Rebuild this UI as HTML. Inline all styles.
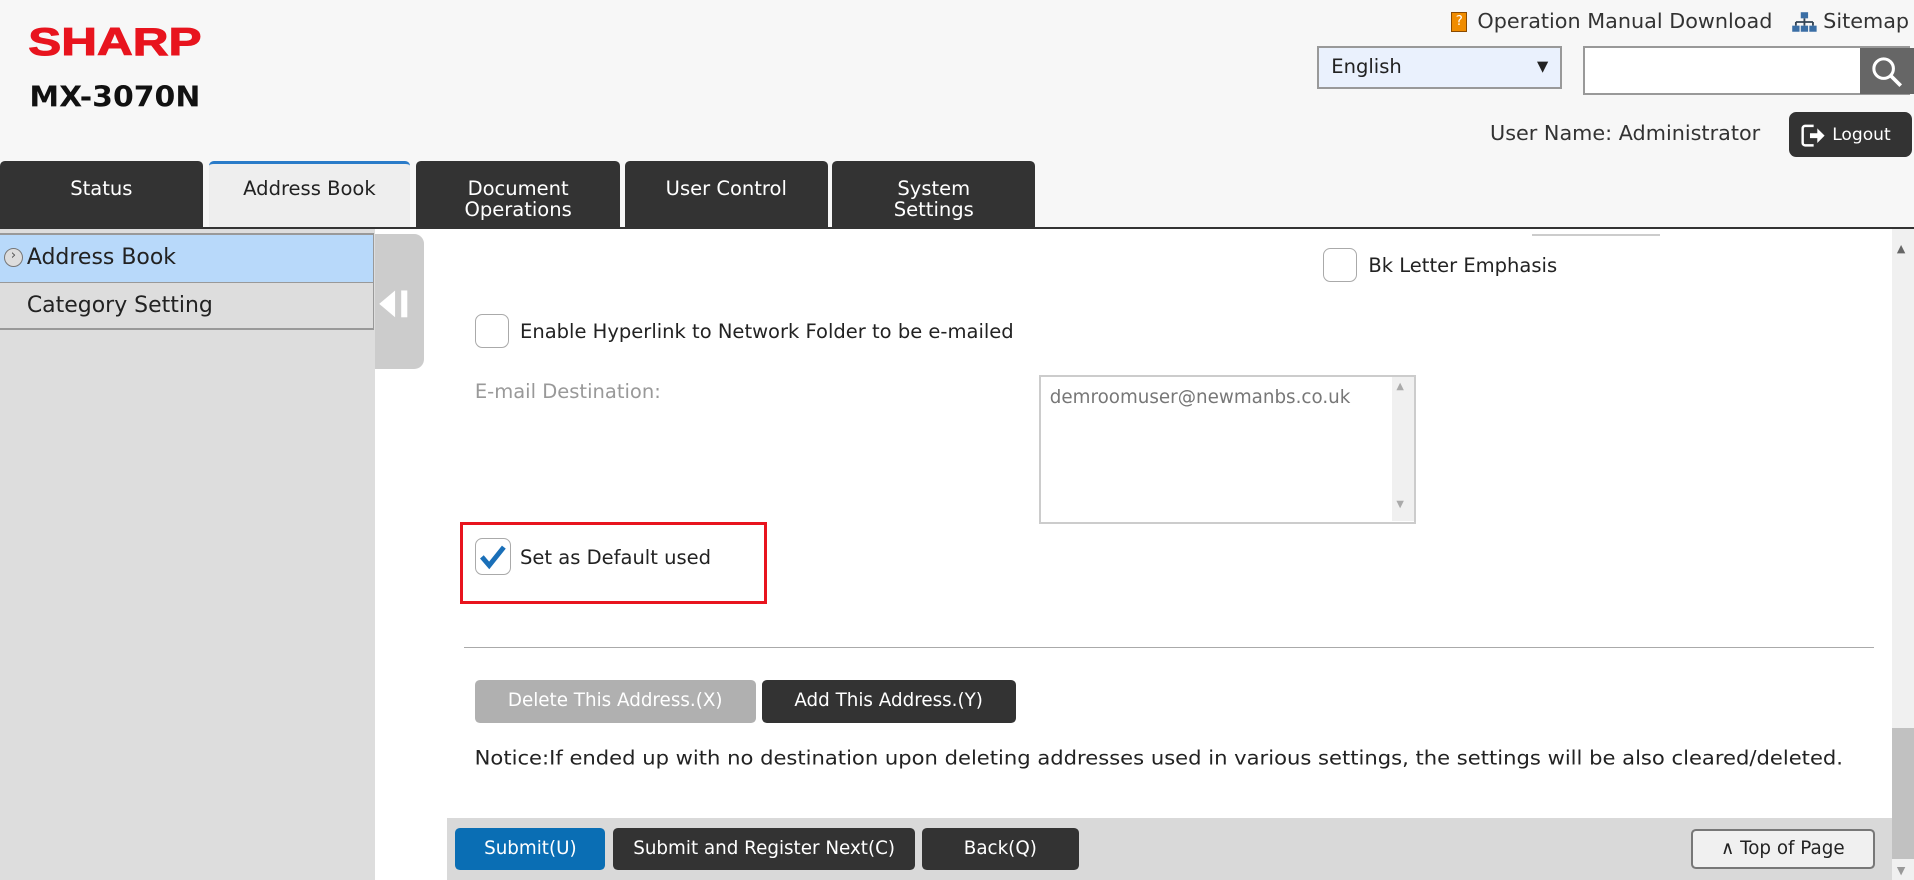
<!DOCTYPE html>
<html><head><meta charset="utf-8"><style>
html,body{margin:0;padding:0;overflow:hidden;width:1914px;height:880px;background:#fff}
#w{zoom:1.22066;width:1568px;height:721px;position:relative;font-family:"DejaVu Sans",sans-serif;color:#222;overflow:hidden}
.a{position:absolute;white-space:nowrap}
.hdr{left:0;top:0;width:1568px;height:187px;background:#f7f7f7}
.tab{top:132px;height:55px;background:#333;color:#fff;border-radius:4px 4px 0 0;text-align:center;font-size:16px;line-height:17px;box-sizing:border-box}
.cb{width:28px;height:28px;border:1px solid #aaa;border-radius:6px;background:#fff;box-sizing:border-box}
.btn{height:35px;border-radius:4px;color:#fff;font-size:15px;line-height:35px;text-align:center}
.t{font-size:16px}
</style></head><body><div id="w">
<div class="a hdr"></div>
<svg class="a" style="left:22px;top:18px" width="146" height="30"><text x="1" y="27" textLength="142" lengthAdjust="spacingAndGlyphs" font-family="Liberation Sans" font-weight="bold" font-size="32" fill="#e8141e" stroke="#e8141e" stroke-width="0.8">SHARP</text></svg>
<svg class="a" style="left:22px;top:62px" width="146" height="30"><text x="2" y="25" textLength="140" lengthAdjust="spacingAndGlyphs" font-family="DejaVu Sans" font-weight="bold" font-size="23" fill="#111">MX-3070N</text></svg>
<div class="a" style="left:1189px;top:10px;width:13px;height:16px;background:#f08c00;border:1px solid #8a4a00;box-sizing:border-box;color:#fff;font-size:11px;line-height:14px;text-align:center">?</div>
<div class="a" style="right:116px;top:7px;font-size:17px;color:#333">Operation Manual Download</div>
<svg class="a" style="left:1467px;top:9px" width="22" height="18" viewBox="0 0 22 18"><rect x="8" y="1" width="6" height="5" fill="#3a6ea5"/><path d="M11 6v3M4 9h14M4 9v3M11 9v3M18 9v3" stroke="#345" stroke-width="1.5" fill="none"/><rect x="1" y="12" width="6" height="5" fill="#3a6ea5"/><rect x="8" y="12" width="6" height="5" fill="#3a6ea5"/><rect x="15" y="12" width="6" height="5" fill="#3a6ea5"/></svg>
<div class="a" style="right:4px;top:7px;font-size:17px;color:#333">Sitemap</div>
<div class="a" style="left:1079px;top:38px;width:201px;height:35px;background:#eaf1fd;border:2px solid #999;box-sizing:border-box;font-size:16px;line-height:31px;padding-left:10px">English<span style="position:absolute;right:10px;font-size:12px">▼</span></div>
<div class="a" style="left:1297px;top:38px;width:268px;height:40px;background:#fff;border:2px solid #999;box-sizing:border-box"></div>
<div class="a" style="left:1524px;top:39px;width:44px;height:38px;background:#666"></div>
<svg class="a" style="left:1531px;top:44px" width="30" height="30" viewBox="0 0 30 30"><circle cx="12" cy="12" r="8" stroke="#fff" stroke-width="2.5" fill="none"/><path d="M18 18l8 8" stroke="#fff" stroke-width="3"/></svg>
<div class="a" style="right:126px;top:99px;font-size:17px;color:#333">User Name: Administrator</div>
<div class="a" style="left:1466px;top:92px;width:100px;height:37px;background:#333;border-radius:6px"></div>
<svg class="a" style="left:1474px;top:99px" width="24" height="24" viewBox="0 0 24 24"><path d="M12 4H5a2 2 0 0 0-2 2v12a2 2 0 0 0 2 2h7" stroke="#fff" stroke-width="2" fill="none"/><path d="M9 10h6V6l6 6-6 6v-4H9z" fill="#fff"/></svg>
<div class="a" style="left:1501px;top:102px;font-size:14px;color:#fff">Logout</div>
<div class="a tab" style="left:0;width:166px;padding-top:15px">Status</div>
<div class="a tab" style="left:171px;width:165px;background:#eee;color:#222;border-top:3px solid #2a7bc8;padding-top:12px">Address Book</div>
<div class="a tab" style="left:341px;width:167px;padding-top:15px">Document<br>Operations</div>
<div class="a tab" style="left:512px;width:166px;padding-top:15px">User Control</div>
<div class="a tab" style="left:682px;width:166px;padding-top:15px">System<br>Settings</div>
<div class="a" style="left:0;top:186px;width:1568px;height:2px;background:#333"></div>
<div class="a" style="left:0;top:188px;width:307px;height:533px;background:#ddd"></div>
<div class="a" style="left:0;top:191px;width:306px;height:40px;background:#b8d9fa;border-top:2px solid #999;border-right:1px solid #999;box-sizing:border-box"></div>
<div class="a" style="left:3px;top:203px;width:16px;height:16px;border:1.5px solid #777;border-radius:50%;box-sizing:border-box;background:#ddd;font-size:11px;line-height:12px;text-align:center;color:#555">›</div>
<div class="a" style="left:22px;top:201px;font-size:18px">Address Book</div>
<div class="a" style="left:0;top:231px;width:306px;height:39px;background:#ddd;border-top:1px solid #999;border-bottom:2px solid #999;border-right:1px solid #999;box-sizing:border-box"></div>
<div class="a" style="left:22px;top:240px;font-size:18px">Category Setting</div>
<div class="a" style="left:307px;top:192px;width:40px;height:110px;background:#ccc;border-radius:0 8px 8px 0"></div>
<svg class="a" style="left:310px;top:236px" width="30" height="26"><path d="M1 13L14 2v22z" fill="#fff"/><rect x="19" y="2" width="5" height="22" fill="#fff"/></svg>
<div class="a" style="left:1255px;top:192px;width:105px;height:1px;background:#ccc"></div>
<div class="a" style="left:1550px;top:188px;width:18px;height:533px;background:#f0f0f0"></div>
<div class="a" style="left:1550px;top:596px;width:18px;height:108px;background:#c1c1c1"></div>
<div class="a" style="left:1554px;top:198px;font-size:9px;color:#666">▲</div>
<div class="a" style="left:1554px;top:708px;font-size:9px;color:#999">▼</div>
<div class="a cb" style="left:1084px;top:203px"></div>
<div class="a t" style="left:1121px;top:208px">Bk Letter Emphasis</div>
<div class="a cb" style="left:389px;top:257px"></div>
<div class="a t" style="left:426px;top:262px">Enable Hyperlink to Network Folder to be e-mailed</div>
<div class="a t" style="left:389px;top:311px;color:#999">E-mail Destination:</div>
<div class="a" style="left:851px;top:307px;width:309px;height:122px;border:2px solid #ccc;box-sizing:border-box;background:#fff"></div>
<div class="a" style="left:1140px;top:309px;width:18px;height:118px;background:#f0f0f0"></div>
<div class="a" style="left:1144px;top:312px;font-size:8px;color:#aaa">▲</div>
<div class="a" style="left:1144px;top:409px;font-size:8px;color:#aaa">▼</div>
<div class="a" style="left:860px;top:317px;font-size:15px;color:#777">demroomuser@newmanbs.co.uk</div>
<div class="a" style="left:377px;top:428px;width:251px;height:67px;border:3px solid #e8141e;box-sizing:border-box"></div>
<div class="a cb" style="left:389px;top:441px;width:30px;height:30px"></div>
<svg class="a" style="left:391px;top:443px" width="26" height="26"><path d="M4 13l6 7L22 5" stroke="#1a6fb8" stroke-width="4" fill="none"/></svg>
<div class="a t" style="left:426px;top:447px">Set as Default used</div>
<div class="a" style="left:380px;top:530px;width:1155px;height:1px;background:#aaa"></div>
<div class="a btn" style="left:389px;top:557px;width:230px;background:#b0b0b0">Delete This Address.(X)</div>
<div class="a btn" style="left:624px;top:557px;width:208px;background:#333">Add This Address.(Y)</div>
<svg class="a" style="left:386px;top:606px" width="1130" height="26"><text x="3" y="20" textLength="1121" lengthAdjust="spacingAndGlyphs" font-family="DejaVu Sans" font-size="16" fill="#222">Notice:If ended up with no destination upon deleting addresses used in various settings, the settings will be also cleared/deleted.</text></svg>
<div class="a" style="left:366px;top:670px;width:1184px;height:51px;background:#d9d9d9"></div>
<div class="a btn" style="left:373px;top:678px;width:123px;background:#0a6eb4">Submit(U)</div>
<div class="a btn" style="left:502px;top:678px;width:248px;background:#333">Submit and Register Next(C)</div>
<div class="a btn" style="left:755px;top:678px;width:129px;background:#333">Back(Q)</div>
<div class="a" style="left:1385px;top:679px;width:151px;height:33px;border:2px solid #777;border-radius:4px;background:#f0f0f0;box-sizing:border-box;font-size:15px;line-height:29px;text-align:center;color:#222">∧ Top of Page</div>
</div></body></html>
